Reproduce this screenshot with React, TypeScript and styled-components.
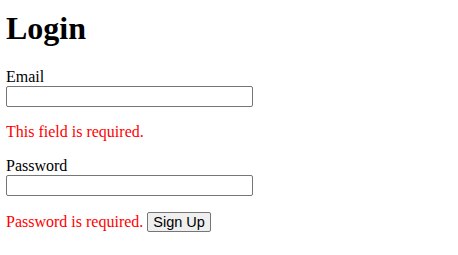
import styled, { createGlobalStyle } from "styled-components";

const GlobalStyle = createGlobalStyle`
  body {
    margin: 10px 8px 8px 6px;
    font-family: "Liberation Serif", "Times New Roman", serif;
    font-size: 16px;
    color: #000;
    background: #fff;
  }
`;

const Form = styled.form`
  display: block;
`;

const Title = styled.h1`
  font-size: 32px;
  font-weight: bold;
  margin: 0 0 21px;
`;

const Label = styled.label`
  display: block;
`;

const Field = styled.input`
  display: block;
  box-sizing: border-box;
  width: 247px;
  height: 21px;
  margin: 0;
  padding: 1px 2px;
  border: 1px solid #767676;
  border-radius: 2px;
  font-family: "Liberation Sans", Arial, sans-serif;
  font-size: 13.33px;
`;

const ErrorText = styled.p`
  color: red;
  margin: 16px 0;
`;

const LastRow = styled.div`
  margin: 16px 0;
  display: flex;
  align-items: center;
  gap: 4px;
`;

const ErrorInline = styled.span`
  color: red;
`;

const SubmitButton = styled.button`
  box-sizing: border-box;
  font-family: "Liberation Sans", Arial, sans-serif;
  font-size: 14.5px;
  padding: 0 5px;
  height: 20px;
  border: 1px solid #767676;
  border-radius: 2px;
  background: #efefef;
  color: #000;
`;

export default function App() {
  return (
    <>
      <GlobalStyle />
      <Form onSubmit={(e) => e.preventDefault()}>
        <Title>Login</Title>
        <Label htmlFor="email">Email</Label>
        <Field id="email" type="email" />
        <ErrorText>This field is required.</ErrorText>
        <Label htmlFor="password">Password</Label>
        <Field id="password" type="password" />
        <LastRow>
          <ErrorInline>Password is required.</ErrorInline>
          <SubmitButton type="submit">Sign Up</SubmitButton>
        </LastRow>
      </Form>
    </>
  );
}
